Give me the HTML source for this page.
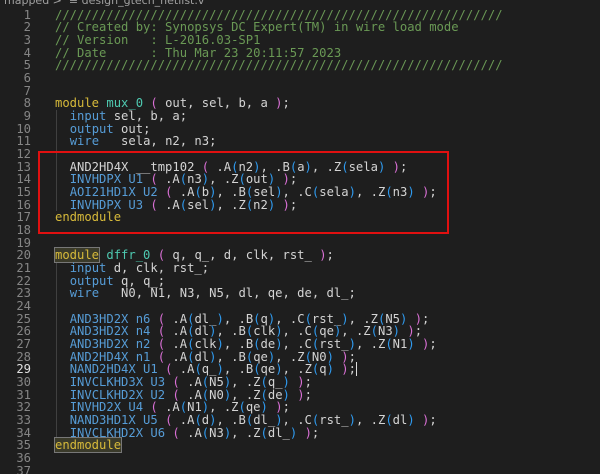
<!DOCTYPE html>
<html><head><meta charset="utf-8"><style>
html,body{margin:0;padding:0;background:#1e1e1e;width:600px;height:474px;overflow:hidden;position:relative}
.l{position:absolute;left:0;height:12.67px;line-height:12.67px;font-family:"DejaVu Sans Mono","Liberation Mono",monospace;font-size:12.2px;white-space:pre;color:#d4d4d4}
.n{position:absolute;width:31px;text-align:right;color:#858585;left:0}
.c{position:absolute;left:55px}
.cm{color:#6a9955}.k{color:#d7ba3a}.t{color:#4ec9b0}.b{color:#569cd6}.p{color:#da70d6}.q{color:#2f9bf0}
.hl{outline:1px solid #777;background:#3a3a2a}
.g{position:absolute;width:1px;background:#404040}
</style></head><body>
<div style="position:absolute;top:-6px;left:4px;font-family:'DejaVu Sans',sans-serif;font-size:11px;color:#a0a0a0">mapped &gt; &nbsp;≡ design_gtech_netlist.v</div>
<div class="g" style="left:56px;top:110px;height:101px"></div>
<div class="g" style="left:56px;top:262px;height:177px"></div>
<div style="position:absolute;left:38px;top:151px;width:407px;height:79px;border:2px solid #e01010"></div>
<div class="l" style="top:8.7px"><span class="n">1</span><span class="c cm">/////////////////////////////////////////////////////////////</span></div>
<div class="l" style="top:21.4px"><span class="n">2</span><span class="c cm">// Created by: Synopsys DC Expert(TM) in wire load mode</span></div>
<div class="l" style="top:34px"><span class="n">3</span><span class="c cm">// Version   : L-2016.03-SP1</span></div>
<div class="l" style="top:46.7px"><span class="n">4</span><span class="c cm">// Date      : Thu Mar 23 20:11:57 2023</span></div>
<div class="l" style="top:59.4px"><span class="n">5</span><span class="c cm">/////////////////////////////////////////////////////////////</span></div>
<div class="l" style="top:72px"><span class="n">6</span></div>
<div class="l" style="top:84.7px"><span class="n">7</span></div>
<div class="l" style="top:97.4px"><span class="n">8</span><span class="c"><span class="k">module</span> <span class="t">mux_0</span> <span class="p">(</span> out, sel, b, a <span class="p">)</span>;</span></div>
<div class="l" style="top:110px"><span class="n">9</span><span class="c">  <span class="b">input</span> sel, b, a;</span></div>
<div class="l" style="top:122.7px"><span class="n">10</span><span class="c">  <span class="b">output</span> out;</span></div>
<div class="l" style="top:135.4px"><span class="n">11</span><span class="c">  <span class="b">wire</span>   sela, n2, n3;</span></div>
<div class="l" style="top:148px"><span class="n">12</span></div>
<div class="l" style="top:160.7px"><span class="n">13</span><span class="c">  AND2HD4X __tmp102 <span class="p">(</span> .A<span class="q">(</span>n2<span class="q">)</span>, .B<span class="q">(</span>a<span class="q">)</span>, .Z<span class="q">(</span>sela<span class="q">)</span> <span class="p">)</span>;</span></div>
<div class="l" style="top:173.4px"><span class="n">14</span><span class="c">  <span class="b">INVHDPX U1</span> <span class="p">(</span> .A<span class="q">(</span>n3<span class="q">)</span>, .Z<span class="q">(</span>out<span class="q">)</span> <span class="p">)</span>;</span></div>
<div class="l" style="top:186px"><span class="n">15</span><span class="c">  <span class="b">AOI21HD1X U2</span> <span class="p">(</span> .A<span class="q">(</span>b<span class="q">)</span>, .B<span class="q">(</span>sel<span class="q">)</span>, .C<span class="q">(</span>sela<span class="q">)</span>, .Z<span class="q">(</span>n3<span class="q">)</span> <span class="p">)</span>;</span></div>
<div class="l" style="top:198.7px"><span class="n">16</span><span class="c">  <span class="b">INVHDPX U3</span> <span class="p">(</span> .A<span class="q">(</span>sel<span class="q">)</span>, .Z<span class="q">(</span>n2<span class="q">)</span> <span class="p">)</span>;</span></div>
<div class="l" style="top:211.4px"><span class="n">17</span><span class="c k">endmodule</span></div>
<div class="l" style="top:224px"><span class="n">18</span></div>
<div class="l" style="top:236.7px"><span class="n">19</span></div>
<div class="l" style="top:249.4px"><span class="n">20</span><span class="c"><span class="k hl">module</span> <span class="t">dffr_0</span> <span class="p">(</span> q, q_, d, clk, rst_ <span class="p">)</span>;</span></div>
<div class="l" style="top:262px"><span class="n">21</span><span class="c">  <span class="b">input</span> d, clk, rst_;</span></div>
<div class="l" style="top:274.7px"><span class="n">22</span><span class="c">  <span class="b">output</span> q, q_;</span></div>
<div class="l" style="top:287.4px"><span class="n">23</span><span class="c">  <span class="b">wire</span>   N0, N1, N3, N5, dl, qe, de, dl_;</span></div>
<div class="l" style="top:300px"><span class="n">24</span></div>
<div class="l" style="top:312.7px"><span class="n">25</span><span class="c">  <span class="b">AND3HD2X n6</span> <span class="p">(</span> .A<span class="q">(</span>dl_<span class="q">)</span>, .B<span class="q">(</span>q<span class="q">)</span>, .C<span class="q">(</span>rst_<span class="q">)</span>, .Z<span class="q">(</span>N5<span class="q">)</span> <span class="p">)</span>;</span></div>
<div class="l" style="top:325.4px"><span class="n">26</span><span class="c">  <span class="b">AND3HD2X n4</span> <span class="p">(</span> .A<span class="q">(</span>dl<span class="q">)</span>, .B<span class="q">(</span>clk<span class="q">)</span>, .C<span class="q">(</span>qe<span class="q">)</span>, .Z<span class="q">(</span>N3<span class="q">)</span> <span class="p">)</span>;</span></div>
<div class="l" style="top:338px"><span class="n">27</span><span class="c">  <span class="b">AND3HD2X n2</span> <span class="p">(</span> .A<span class="q">(</span>clk<span class="q">)</span>, .B<span class="q">(</span>de<span class="q">)</span>, .C<span class="q">(</span>rst_<span class="q">)</span>, .Z<span class="q">(</span>N1<span class="q">)</span> <span class="p">)</span>;</span></div>
<div class="l" style="top:350.7px"><span class="n">28</span><span class="c">  <span class="b">AND2HD4X n1</span> <span class="p">(</span> .A<span class="q">(</span>dl<span class="q">)</span>, .B<span class="q">(</span>qe<span class="q">)</span>, .Z<span class="q">(</span>N0<span class="q">)</span> <span class="p">)</span>;</span></div>
<div class="l" style="top:363.4px"><span class="n" style="color:#e0e0e0">29</span><span class="c">  <span class="b">NAND2HD4X U1</span> <span class="p">(</span> .A<span class="q">(</span>q_<span class="q">)</span>, .B<span class="q">(</span>qe<span class="q">)</span>, .Z<span class="q">(</span>q<span class="q">)</span> <span class="p">)</span>;<span style="border-left:1px solid #ddd"></span></span></div>
<div class="l" style="top:376px"><span class="n">30</span><span class="c">  <span class="b">INVCLKHD3X U3</span> <span class="p">(</span> .A<span class="q">(</span>N5<span class="q">)</span>, .Z<span class="q">(</span>q_<span class="q">)</span> <span class="p">)</span>;</span></div>
<div class="l" style="top:388.7px"><span class="n">31</span><span class="c">  <span class="b">INVCLKHD2X U2</span> <span class="p">(</span> .A<span class="q">(</span>N0<span class="q">)</span>, .Z<span class="q">(</span>de<span class="q">)</span> <span class="p">)</span>;</span></div>
<div class="l" style="top:401.4px"><span class="n">32</span><span class="c">  <span class="b">INVHD2X U4</span> <span class="p">(</span> .A<span class="q">(</span>N1<span class="q">)</span>, .Z<span class="q">(</span>qe<span class="q">)</span> <span class="p">)</span>;</span></div>
<div class="l" style="top:414px"><span class="n">33</span><span class="c">  <span class="b">NAND3HD1X U5</span> <span class="p">(</span> .A<span class="q">(</span>d<span class="q">)</span>, .B<span class="q">(</span>dl_<span class="q">)</span>, .C<span class="q">(</span>rst_<span class="q">)</span>, .Z<span class="q">(</span>dl<span class="q">)</span> <span class="p">)</span>;</span></div>
<div class="l" style="top:426.7px"><span class="n">34</span><span class="c">  <span class="b">INVCLKHD2X U6</span> <span class="p">(</span> .A<span class="q">(</span>N3<span class="q">)</span>, .Z<span class="q">(</span>dl_<span class="q">)</span> <span class="p">)</span>;</span></div>
<div class="l" style="top:439.4px"><span class="n">35</span><span class="c"><span class="k hl">endmodule</span></span></div>
<div class="l" style="top:452px"><span class="n">36</span></div>
<div class="l" style="top:464.7px"><span class="n">37</span></div>
</body></html>
